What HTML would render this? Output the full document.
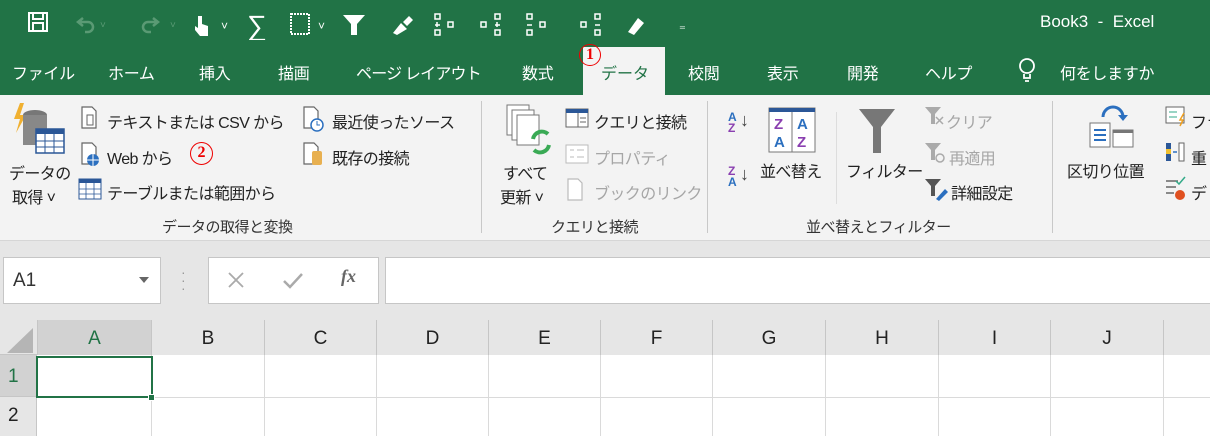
<!DOCTYPE html>
<html><head><meta charset="utf-8"><style>
*{margin:0;padding:0;box-sizing:border-box}
body{width:1210px;height:436px;overflow:hidden;position:relative;background:#fff;font-family:"Liberation Sans","Noto Sans CJK JP",sans-serif;}
.a{position:absolute;white-space:nowrap}
.g{background:#217346;position:absolute;left:0;top:0;width:1210px;height:95px}
.w{color:#fff}
.tab{font-size:16px;top:60px;color:#fff;letter-spacing:-0.3px}
.rb{position:absolute;left:0;top:95px;width:1210px;height:146px;background:#f3f3f3;border-bottom:1px solid #d6d6d6}
.t{font-size:16px;color:#222;letter-spacing:-0.6px}
.dis{color:#a6a6a6}
.sep{position:absolute;width:1px;background:#c8c8c8}
.lbl{font-size:15px;color:#333;top:216px;letter-spacing:-0.5px}
.col{position:absolute;top:320px;height:35px;border-right:1px solid #c6c6c6;text-align:center;font-size:19px;line-height:38px;color:#222;background:#e6e6e6}
.vl{position:absolute;top:355px;height:81px;width:1px;background:#dadada}
</style></head><body>
<div class="g"></div>
<svg class="a" style="left:25px;top:6px" width="680" height="34" viewBox="0 0 680 34">
<g fill="none" stroke="#fff" stroke-width="2">
<rect x="4" y="7" width="18" height="18"/><rect x="8" y="7" width="10" height="6"/><rect x="8" y="17" width="10" height="8"/>
</g>
<g stroke="#5a9a74" fill="none" stroke-width="2.5"><path d="M58 12 l-5 4 5 4 M53 16 h10 a5 5 0 0 1 0 10 h-3"/><path d="M128 12 l5 4 -5 4 M133 16 h-10 a5 5 0 0 0 0 10 h3"/></g>
<text x="75" y="22" fill="#5a9a74" font-size="10">˅</text><text x="145" y="22" fill="#5a9a74" font-size="10">˅</text>
<path d="M173 10 v12 l-3 -2 v4 l5 6 h8 v-10 l-6 -2 v-8z" fill="#fff"/>
<text x="196" y="24" fill="#fff" font-size="12">˅</text>
<text x="222" y="29" fill="#fff" font-size="28">∑</text>
<rect x="266" y="8" width="18" height="20" fill="none" stroke="#fff" stroke-width="2" stroke-dasharray="2 1"/>
<text x="293" y="24" fill="#fff" font-size="12">˅</text>
<path d="M318 9 h22 l-8 9 v11 h-6 v-11z" fill="#fff"/>
<path d="M368 27 l8 -10 6 6 -10 6z M378 16 l6 -6 4 4 -6 6z" fill="#fff"/>
<g fill="none" stroke="#fff" stroke-width="1.5">
<rect x="410" y="8" width="5" height="5"/><rect x="410" y="24" width="5" height="5"/><rect x="423" y="16" width="5" height="5"/><path d="M412 16 v5 M410 19 h5"/>
<rect x="456" y="16" width="5" height="5"/><rect x="470" y="8" width="5" height="5"/><rect x="470" y="24" width="5" height="5"/><path d="M472 16 v5 M470 19 h5"/>
<rect x="502" y="8" width="5" height="5"/><rect x="502" y="24" width="5" height="5"/><rect x="515" y="16" width="5" height="5"/><path d="M502 19 h5"/>
<rect x="556" y="16" width="5" height="5"/><rect x="570" y="8" width="5" height="5"/><rect x="570" y="24" width="5" height="5"/><path d="M570 19 h5"/>
</g>
<path d="M603 26 l10 -14 6 5 -10 12z" fill="#fff"/>
<text x="654" y="24" fill="#fff" font-size="13">₌</text>
</svg>
<div class="a w" style="left:1040px;top:12px;font-size:17px">Book3&nbsp; - &nbsp;Excel</div>
<div class="a tab" style="left:12px">ファイル</div>
<div class="a tab" style="left:108px">ホーム</div>
<div class="a tab" style="left:199px">挿入</div>
<div class="a tab" style="left:278px">描画</div>
<div class="a tab" style="left:356px;letter-spacing:-0.8px">ページ レイアウト</div>
<div class="a tab" style="left:522px">数式</div>
<div class="a" style="left:583px;top:47px;width:82px;height:48px;background:#f3f3f3"></div>
<div class="a" style="left:601px;top:60px;font-size:16px;color:#217346">データ</div>
<div class="a" style="left:579px;top:44px;width:22px;height:22px;border:1.5px solid #e00;border-radius:50%;color:#e00;font-size:16px;font-weight:bold;text-align:center;line-height:19px;font-family:'Liberation Serif',serif">1</div>
<div class="a tab" style="left:688px">校閲</div>
<div class="a tab" style="left:767px">表示</div>
<div class="a tab" style="left:847px">開発</div>
<div class="a tab" style="left:925px">ヘルプ</div>
<svg class="a" style="left:1017px;top:57px" width="20" height="26"><circle cx="10" cy="9" r="7" fill="none" stroke="#fff" stroke-width="1.8"/><path d="M7 17 v4 h6 v-4 M8 24 h4" stroke="#fff" stroke-width="1.8" fill="none"/></svg>
<div class="a tab" style="left:1060px">何をしますか</div>

<div class="rb"></div>
<!-- small icons -->
<svg class="a" style="left:0;top:95px" width="1210" height="146">
<g fill="#fff" stroke="#666" stroke-width="1.2">
<path d="M82 12 h10 l4 4 v17 h-14z"/>
<path d="M82 48 h10 l4 4 v17 h-14z"/>
<path d="M304 12 h10 l4 4 v17 h-14z"/>
<path d="M304 48 h10 l4 4 v17 h-14z"/>
<path d="M568 84 h10 l4 4 v17 h-14z" stroke="#bbb"/>
</g>
<rect x="87" y="20" width="6" height="10" fill="none" stroke="#666"/>
<circle cx="93" cy="65" r="6" fill="#2b6fbf"/><path d="M87 65 h12 M93 59 v12" stroke="#fff"/>
<circle cx="317" cy="30" r="6" fill="#fff" stroke="#2b6fbf" stroke-width="1.5"/><path d="M317 26 v4 h3" stroke="#2b6fbf" fill="none"/>
<rect x="312" y="56" width="10" height="14" rx="2" fill="#e8b050"/>
<rect x="79" y="84" width="22" height="20" fill="#fff" stroke="#2b5797"/><rect x="79" y="84" width="22" height="4" fill="#2b5797"/><path d="M86 88 v16 M94 88 v16 M79 94 h22 M79 99 h22" stroke="#2b5797" stroke-width=".8"/>
<rect x="566" y="14" width="22" height="18" fill="#fff" stroke="#666"/><rect x="566" y="14" width="22" height="4" fill="#2b5797"/><path d="M578 18 v14 M580 23 h6 M580 27 h6" stroke="#666"/>
<rect x="566" y="50" width="22" height="18" fill="#fff" stroke="#bbb"/><path d="M570 55 h4 M570 62 h4 M577 55 h7 M577 62 h7" stroke="#bbb"/>
<path d="M925 12 h16 l-6 7 v10 h-4 v-10z" fill="#aaa"/><path d="M936 22 l7 7 M943 22 l-7 7" stroke="#aaa" stroke-width="1.5"/>
<path d="M925 48 h16 l-6 7 v10 h-4 v-10z" fill="#aaa"/><circle cx="940" cy="63" r="4" fill="none" stroke="#aaa" stroke-width="1.5"/>
<path d="M925 84 h16 l-6 7 v10 h-4 v-10z" fill="#555"/><path d="M936 104 l9 -10 3 3 -9 9z" fill="#2b6fbf"/>
<rect x="1166" y="12" width="18" height="16" fill="#fff" stroke="#666"/><path d="M1169 17 h8 M1169 22 h8" stroke="#3a8"/><path d="M1184 18 l-4 7 h3 l-3 6" stroke="#f0a020" stroke-width="1.5" fill="none"/>
<rect x="1166" y="48" width="5" height="18" fill="#2b5797"/><rect x="1166" y="54" width="5" height="5" fill="#f0c030"/><path d="M1173 57 h4" stroke="#2b6fbf" stroke-width="1.5"/><rect x="1179" y="48" width="5" height="18" fill="#fff" stroke="#666"/>
<path d="M1166 86 h12 M1166 92 h10 M1166 98 h8" stroke="#666" stroke-width="1.5"/><path d="M1176 86 l3 3 6 -7" stroke="#3a8" stroke-width="1.5" fill="none"/><circle cx="1180" cy="100" r="5" fill="#e05020"/>
</g>
</svg>
<!-- group 1 -->
<svg class="a" style="left:10px;top:103px" width="60" height="55"><path d="M10 0 l-6 16 h6 l-4 14 10 -18 h-6 l4 -12z" fill="#f0b030"/><ellipse cx="25" cy="12" rx="12" ry="5" fill="#777"/><rect x="13" y="12" width="24" height="30" fill="#888"/><rect x="26" y="26" width="28" height="24" fill="#fff" stroke="#2b5797" stroke-width="1.5"/><rect x="26" y="26" width="28" height="5" fill="#2b5797"/><path d="M35 31 v19 M44 31 v19 M26 38 h28 M26 44 h28" stroke="#2b5797"/></svg>
<div class="a t" style="left:9px;top:160px">データの</div>
<div class="a t" style="left:12px;top:184px">取得 ˅</div>
<div class="a t" style="left:107px;top:109px">テキストまたは CSV から</div>
<div class="a t" style="left:107px;top:145px">Web から</div>
<div class="a" style="left:190px;top:142px;width:23px;height:23px;border:1.5px solid #e00;border-radius:50%;color:#e00;font-size:16px;font-weight:bold;text-align:center;line-height:20px;font-family:'Liberation Serif',serif">2</div>
<div class="a t" style="left:107px;top:180px">テーブルまたは範囲から</div>
<div class="a t" style="left:332px;top:109px">最近使ったソース</div>
<div class="a t" style="left:332px;top:145px">既存の接続</div>
<div class="a lbl" style="left:162px">データの取得と変換</div>
<div class="sep" style="left:481px;top:101px;height:132px"></div>
<!-- group 2 -->
<svg class="a" style="left:505px;top:103px" width="50" height="55"><g fill="#fff" stroke="#777"><rect x="2" y="2" width="22" height="30"/><rect x="7" y="7" width="22" height="30"/><rect x="12" y="12" width="22" height="30"/></g><path d="M28 36 a9 9 0 0 1 15 -5 M44 42 a9 9 0 0 1 -15 5" stroke="#3aaa55" stroke-width="4" fill="none"/></svg>
<div class="a t" style="left:503px;top:160px">すべて</div>
<div class="a t" style="left:500px;top:184px">更新 ˅</div>
<div class="a t" style="left:594px;top:109px">クエリと接続</div>
<div class="a t dis" style="left:594px;top:145px">プロパティ</div>
<div class="a t dis" style="left:594px;top:180px">ブックのリンク</div>
<div class="a lbl" style="left:551px">クエリと接続</div>
<div class="sep" style="left:707px;top:101px;height:132px"></div>
<!-- group 3 -->
<div class="a" style="left:728px;top:112px;font-size:12px;line-height:11px;font-weight:bold"><span style="color:#2b6fbf">A</span><br><span style="color:#8a3fb0">Z</span></div>
<div class="a" style="left:740px;top:110px;font-size:18px;color:#444">↓</div>
<div class="a" style="left:728px;top:166px;font-size:12px;line-height:11px;font-weight:bold"><span style="color:#8a3fb0">Z</span><br><span style="color:#2b6fbf">A</span></div>
<div class="a" style="left:740px;top:164px;font-size:18px;color:#444">↓</div>
<svg class="a" style="left:768px;top:107px" width="48" height="46"><rect x="1" y="1" width="46" height="44" fill="#fff" stroke="#777"/><rect x="1" y="1" width="46" height="4" fill="#2b5797"/><line x1="24" y1="5" x2="24" y2="45" stroke="#777"/><text x="6" y="22" fill="#8a3fb0" font-size="15" font-weight="bold" font-family="Liberation Sans">Z</text><text x="6" y="40" fill="#2b6fbf" font-size="15" font-weight="bold" font-family="Liberation Sans">A</text><text x="29" y="22" fill="#2b6fbf" font-size="15" font-weight="bold" font-family="Liberation Sans">A</text><text x="29" y="40" fill="#8a3fb0" font-size="15" font-weight="bold" font-family="Liberation Sans">Z</text></svg>
<div class="a t" style="left:760px;top:158px">並べ替え</div>
<div class="sep" style="left:836px;top:112px;height:92px;background:#ddd"></div>
<svg class="a" style="left:857px;top:107px" width="40" height="48"><path d="M2 2 h36 l-14 18 v26 h-8 v-26z" fill="#777"/></svg>
<div class="a t" style="left:846px;top:158px">フィルター</div>
<div class="a t dis" style="left:946px;top:109px">クリア</div>
<div class="a t dis" style="left:949px;top:145px">再適用</div>
<div class="a t" style="left:951px;top:180px">詳細設定</div>
<div class="a lbl" style="left:806px">並べ替えとフィルター</div>
<div class="sep" style="left:1052px;top:101px;height:132px"></div>
<!-- group 4 -->
<svg class="a" style="left:1085px;top:105px" width="52" height="44"><path d="M18 12 a10 10 0 0 1 20 0" stroke="#2b6fbf" stroke-width="3" fill="none"/><path d="M33 10 l5 6 5 -6z" fill="#2b6fbf"/><rect x="5" y="18" width="20" height="24" fill="#fff" stroke="#777"/><path d="M9 25 h12 M9 30 h12 M9 35 h12" stroke="#2b6fbf" stroke-width="2"/><rect x="28" y="25" width="20" height="17" fill="#fff" stroke="#777"/><rect x="28" y="25" width="20" height="3" fill="#777"/></svg>
<div class="a t" style="left:1067px;top:158px">区切り位置</div>
<div class="a t" style="left:1191px;top:109px">フラ</div>
<div class="a t" style="left:1191px;top:145px">重</div>
<div class="a t" style="left:1191px;top:180px">デ</div>

<!-- formula bar area -->
<div class="a" style="left:0;top:241px;width:1210px;height:79px;background:#e6e6e6"></div>
<div class="a" style="left:3px;top:257px;width:158px;height:47px;background:#fff;border:1px solid #c6c6c6"></div>
<div class="a" style="left:13px;top:270px;font-size:19px;color:#333">A1</div>
<div class="a" style="left:139px;top:277px;width:0;height:0;border-left:5px solid transparent;border-right:5px solid transparent;border-top:6px solid #666"></div>
<div class="a" style="left:181px;top:268px;font-size:14px;color:#999;line-height:8px">·<br>·<br>·</div>
<div class="a" style="left:208px;top:257px;width:171px;height:47px;background:#fff;border:1px solid #c6c6c6"></div>
<svg class="a" style="left:226px;top:270px" width="130" height="22"><path d="M3 3 l14 14 M17 3 l-14 14" stroke="#aaa" stroke-width="1.8"/><path d="M58 11 l6 6 12 -13" stroke="#aaa" stroke-width="2.5" fill="none"/></svg>
<div class="a" style="left:341px;top:266px;font-size:18px;color:#666;font-style:italic;font-family:'Liberation Serif',serif;font-weight:bold">fx</div>
<div class="a" style="left:385px;top:257px;width:830px;height:47px;background:#fff;border:1px solid #c6c6c6"></div>

<!-- grid -->
<div class="a" style="left:0;top:320px;width:1210px;height:35px;background:#e6e6e6;border-bottom:1px solid #c6c6c6"></div>
<svg class="a" style="left:6px;top:328px" width="28" height="25"><path d="M27 0 v25 h-26z" fill="#b5b5b5"/></svg>
<div class="col" style="left:37px;width:115px;background:#d2d2d2;color:#217346;border-left:1px solid #c6c6c6">A</div>
<div class="col" style="left:152px;width:113px">B</div>
<div class="col" style="left:265px;width:112px">C</div>
<div class="col" style="left:377px;width:112px">D</div>
<div class="col" style="left:489px;width:112px">E</div>
<div class="col" style="left:601px;width:112px">F</div>
<div class="col" style="left:713px;width:113px">G</div>
<div class="col" style="left:826px;width:113px">H</div>
<div class="col" style="left:939px;width:112px">I</div>
<div class="col" style="left:1051px;width:113px">J</div>
<div class="col" style="left:1164px;width:60px"></div>
<div class="a" style="left:0;top:355px;width:37px;height:42px;background:#d2d2d2;border-right:1px solid #c6c6c6;border-bottom:1px solid #c6c6c6;font-size:19px;color:#217346;padding-left:8px;line-height:44px">1</div>
<div class="a" style="left:0;top:397px;width:37px;height:39px;background:#e6e6e6;border-right:1px solid #c6c6c6;font-size:19px;color:#222;padding-left:8px;line-height:38px">2</div>
<div class="vl" style="left:264px"></div><div class="vl" style="left:376px"></div><div class="vl" style="left:488px"></div><div class="vl" style="left:600px"></div><div class="vl" style="left:712px"></div><div class="vl" style="left:825px"></div><div class="vl" style="left:938px"></div><div class="vl" style="left:1050px"></div><div class="vl" style="left:1163px"></div><div class="vl" style="left:151px"></div>
<div class="a" style="left:37px;top:397px;width:1173px;height:1px;background:#dadada"></div>
<div class="a" style="left:36px;top:356px;width:117px;height:42px;border:2px solid #217346"></div>
<div class="a" style="left:148px;top:394px;width:7px;height:7px;background:#217346;border:1px solid #fff"></div>
</body></html>
